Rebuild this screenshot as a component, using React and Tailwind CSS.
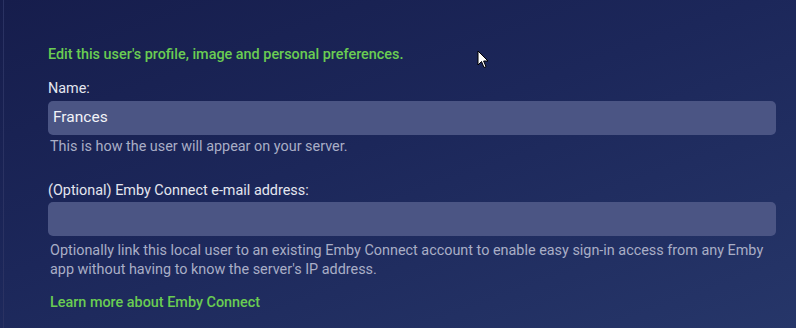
import React from "react";

export default function App() {
  return (
    <div
      className="relative w-[796px] h-[328px] overflow-hidden bg-[linear-gradient(160deg,#161d4c_0%,#1c275a_45%,#263669_100%)]"
      style={{ fontFamily: "Roboto, 'Noto Sans', sans-serif" }}
    >
      <div className="absolute left-[3px] top-0 h-full w-px bg-[#2a3262]" />
      <div className="flex flex-col pl-[48px] pr-[20px] pt-[45px]">
        <p className="text-[14.4px] leading-[20px] font-medium text-[#6acd52]">
          Edit this user's profile, image and personal preferences.
        </p>
        <label className="mt-[14px] text-[14.4px] leading-[20px] text-[#e4e6ef]">Name:</label>
        <div className="mt-[2px] h-[34px] rounded-[5px] bg-[#4b5584] flex items-center px-[5px] text-[15.5px] text-[#f2f3f8]">
          Frances
        </div>
        <p className="mt-[2px] pl-[2px] text-[14.4px] leading-[20px] text-[#a9aec6]">
          This is how the user will appear on your server.
        </p>
        <label className="mt-[24px] text-[14.4px] leading-[20px] text-[#e4e6ef]">
          (Optional) Emby Connect e-mail address:
        </label>
        <div className="mt-[1px] h-[34px] rounded-[5px] bg-[#4b5584]" />
        <p className="mt-[5px] pl-[2px] text-[14.4px] leading-[19px] text-[#a9aec6] whitespace-nowrap">
          Optionally link this local user to an existing Emby Connect account to enable easy sign-in access from any Emby
          <br />
          app without having to know the server's IP address.
        </p>
        <a className="mt-[14px] pl-[2px] text-[14.4px] leading-[20px] font-medium text-[#6acd52]">
          Learn more about Emby Connect
        </a>
      </div>
      <svg className="absolute left-[477px] top-[50px]" width="12" height="20" viewBox="0 0 12 20">
        <path d="M1 1 L1 15 L4.5 11.5 L7 17.5 L9 16.7 L6.6 11 L11 11 Z" fill="#fff" stroke="#000" strokeWidth="1" />
      </svg>
    </div>
  );
}
